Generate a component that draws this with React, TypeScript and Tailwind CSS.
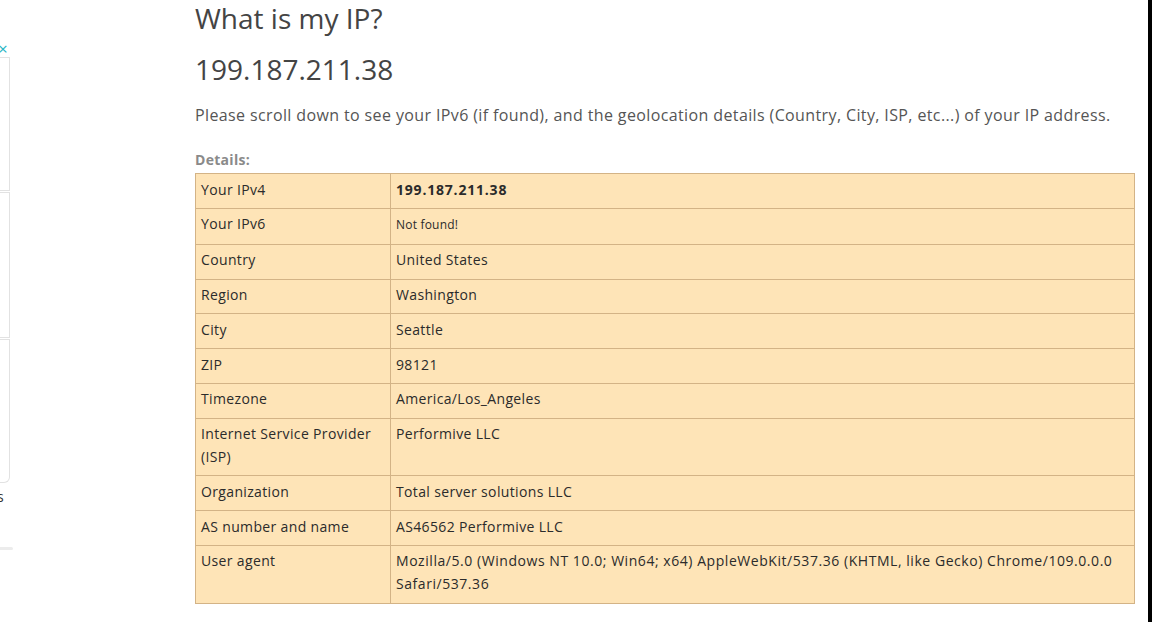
import React from "react";

const rows: { label: string; value: React.ReactNode; }[] = [
  { label: "Your IPv4", value: <span className="font-bold text-[14px] tracking-[0.8px]">199.187.211.38</span> },
  { label: "Your IPv6", value: <span className="text-[12px] tracking-[0.2px]">Not found!</span> },
  { label: "Country", value: "United States" },
  { label: "Region", value: "Washington" },
  { label: "City", value: "Seattle" },
  { label: "ZIP", value: "98121" },
  { label: "Timezone", value: "America/Los_Angeles" },
  { label: "Internet Service Provider (ISP)", value: "Performive LLC" },
  { label: "Organization", value: "Total server solutions LLC" },
  { label: "AS number and name", value: "AS46562 Performive LLC" },
  {
    label: "User agent",
    value: (
      <span className="tracking-[0.55px]">
        Mozilla/5.0 (Windows NT 10.0; Win64; x64) AppleWebKit/537.36 (KHTML, like Gecko) Chrome/109.0.0.0 Safari/537.36
      </span>
    ),
  },
];

function SideAds() {
  // left sidebar, mostly scrolled out of view
  return (
    <div className="w-[14px] flex flex-col pt-[41px] overflow-hidden">
      <div className="h-[16px] text-[17px] leading-[16px] text-[#26b5c4] -ml-[2px]">×</div>
      <div className="w-[10px] h-[134px] border-r border-t border-b border-[#e2e2e2]" />
      <div className="w-[10px] h-[146px] border-r border-t border-b border-[#e2e2e2] mt-[1px]" />
      <div className="w-[10px] h-[144px] border-r border-t border-b border-[#e2e2e2] rounded-br-[6px] mt-[1px]" />
      <div className="text-[14px] leading-[20px] text-[#333] -ml-[3px] mt-[4px]">s</div>
      <div className="w-[13px] h-[3px] bg-[#ececec] mt-[40px] rounded-r-sm" />
    </div>
  );
}

export default function App() {
  return (
    <div className="w-[1152px] h-[622px] flex bg-white overflow-hidden font-['Open_Sans',sans-serif]">
      <div className="w-[195px] flex">
        <SideAds />
      </div>

      <div className="w-[940px] flex flex-col">
        <h1 className="mt-[2px] text-[28px] leading-[1.2] text-[#444]">What is my IP?</h1>
        <h2 className="mt-[17px] text-[28px] leading-[1.2] text-[#444]">199.187.211.38</h2>
        <p className="mt-[17px] text-[16px] leading-[24px] tracking-[0.38px] text-[#555] whitespace-nowrap">
          Please scroll down to see your IPv6 (if found), and the geolocation details (Country, City, ISP, etc...) of your IP address.
        </p>
        <div className="mt-[23px] text-[14px] leading-[20px] font-bold tracking-[0.3px] text-[#8a8a8a]">Details:</div>

        <table className="mt-[3px] w-full border-collapse bg-[#fee4b7] text-[14px] leading-[22.8px] tracking-[0.35px] text-[#2b2b2b]">
          <tbody>
            {rows.map((r) => (
              <tr key={r.label}>
                <td className="w-[195px] border border-[#d3b386] pl-[5px] pr-[5px] pt-[4.5px] pb-[6.5px] align-top">
                  {r.label}
                </td>
                <td className="border border-[#d3b386] pl-[5px] pr-[5px] pt-[4.5px] pb-[6.5px] align-top">
                  {r.value}
                </td>
              </tr>
            ))}
          </tbody>
        </table>
      </div>

      <div className="flex-1" />
      <div className="w-[4px] h-full bg-black" />
    </div>
  );
}
